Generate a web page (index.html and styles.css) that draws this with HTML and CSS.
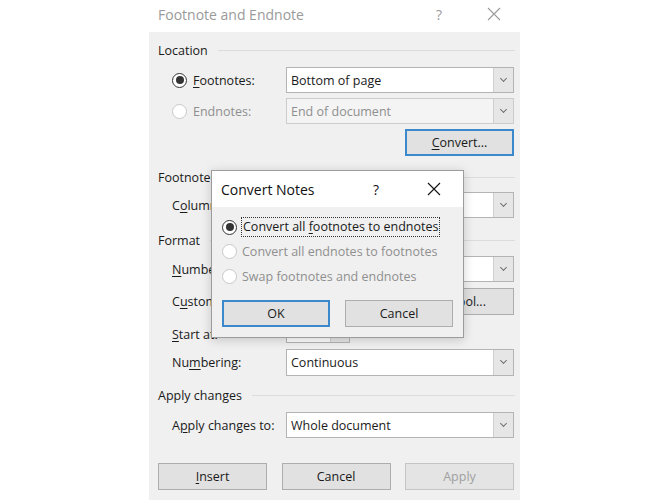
FILE: index.html
```html
<!DOCTYPE html>
<html lang="en">
<head>
    <meta charset="UTF-8">
    <title>Footnote and Endnote</title>
    <link rel="stylesheet" href="styles.css">
</head>
<body>
    <div class="window">
        <div class="titlebar">
            <span class="title">Footnote and Endnote</span>
            <span class="help">?</span>
            <svg class="close" width="14" height="14" viewBox="0 0 14 14"><path d="M1 1 L13 13 M13 1 L1 13" stroke="currentColor" stroke-width="1.1" fill="none"/></svg>
        </div>
        <div class="panel">
            <div class="group group-first"><span>Location</span><i></i></div>
            <div class="row row-first">
                <label class="label radio-label"><span class="radio checked"></span><span><u>F</u>ootnotes:</span></label>
                <div class="select"><span>Bottom of page</span><b class="arrow"></b></div>
            </div>
            <div class="row">
                <label class="label radio-label disabled"><span class="radio"></span><span>Endnotes:</span></label>
                <div class="select disabled"><span>End of document</span><b class="arrow"></b></div>
            </div>
            <div class="row row-end">
                <button class="btn focus"><u>C</u>onvert...</button>
            </div>

            <div class="group"><span>Footnote layout</span><i></i></div>
            <div class="row">
                <label class="label">C<u>o</u>lumns:</label>
                <div class="select"><span>Match section layout</span><b class="arrow"></b></div>
            </div>

            <div class="group group-format"><span>Format</span><i></i></div>
            <div class="row row-gap6">
                <label class="label"><u>N</u>umber format:</label>
                <div class="select"><span>1, 2, 3, ...</span><b class="arrow"></b></div>
            </div>
            <div class="row row-gap6">
                <label class="label">C<u>u</u>stom mark:</label>
                <div class="field"></div>
                <button class="btn"><u>S</u>ymbol...</button>
            </div>
            <div class="row row-spin">
                <label class="label"><u>S</u>tart at:</label>
                <div class="spin"><span>1</span><b class="spin-arrow"></b></div>
            </div>
            <div class="row row-gap6 row-tall">
                <label class="label">Nu<u>m</u>bering:</label>
                <div class="select"><span>Continuous</span><b class="arrow"></b></div>
            </div>

            <div class="group group-apply"><span>Apply changes</span><i></i></div>
            <div class="row row-apply">
                <label class="label">A<u>p</u>ply changes to:</label>
                <div class="select"><span>Whole document</span><b class="arrow"></b></div>
            </div>

            <div class="actions">
                <button class="btn"><u>I</u>nsert</button>
                <button class="btn">Cancel</button>
                <button class="btn disabled">Apply</button>
            </div>
        </div>
    </div>

    <div class="modal">
        <div class="modal-titlebar">
            <span class="modal-title">Convert Notes</span>
            <span class="modal-help">?</span>
            <svg class="modal-close" width="14" height="14" viewBox="0 0 14 14"><path d="M1 1 L13 13 M13 1 L1 13" stroke="currentColor" stroke-width="1.1" fill="none"/></svg>
        </div>
        <div class="modal-body">
            <div class="option"><span class="radio checked"></span><span class="focus-text">Convert all <u>f</u>ootnotes to endnotes</span></div>
            <div class="option disabled"><span class="radio"></span><span>Convert all endnotes to footnotes</span></div>
            <div class="option disabled"><span class="radio"></span><span>Swap footnotes and endnotes</span></div>
            <div class="modal-actions">
                <button class="btn focus">OK</button>
                <button class="btn">Cancel</button>
            </div>
        </div>
    </div>
</body>
</html>
```

FILE: styles.css
```css
body {
    margin: 0;
    width: 670px;
    height: 500px;
    background-color: #ffffff;
    font-family: 'Open Sans', 'Noto Sans', sans-serif;
    font-size: 12.5px;
    color: #1a1a1a;
    position: relative;
    overflow: hidden;
}

u {
    text-decoration-thickness: 1px;
    text-underline-offset: 2px;
}

.window {
    margin-left: 149px;
    width: 371px;
}

.titlebar {
    height: 32px;
    display: flex;
    align-items: center;
    color: #9a9a9a;
    padding-left: 9px;
}

.title {
    font-size: 14px;
    margin-top: -4px;
}

.help {
    margin-left: auto;
    margin-right: 45px;
    font-size: 14px;
    margin-top: -4px;
}

.close {
    margin-right: 19px;
    margin-top: -4px;
}

.panel {
    background-color: #f0f0f0;
    padding: 8px 6px 20px 9px;
}

.group {
    height: 20px;
    display: flex;
    align-items: center;
    margin-top: 11px;
}

.group i {
    flex: 1;
    height: 1px;
    background-color: #dcdcdc;
    margin-left: 10px;
    margin-right: -1px;
}

.group-first {
    margin-top: 0;
}

.group-format {
    margin-top: 12px;
}

.group-apply {
    margin-top: 9px;
}

.row {
    display: flex;
    align-items: center;
    height: 26px;
    margin-top: 5px;
}

.row-first {
    margin-top: 7px;
}

.row-gap6 {
    margin-top: 6px;
}

.row-tall {
    height: 27px;
}

.row-tall .select {
    height: 27px;
}

.row-end {
    justify-content: flex-end;
    height: 27px;
}

.row-spin {
    height: 23px;
    margin-top: 6px;
    align-items: flex-end;
}

.row-apply {
    margin-top: 7px;
}

.label {
    width: 114px;
    padding-left: 14px;
    flex-shrink: 0;
}

.radio-label {
    display: flex;
    align-items: center;
    gap: 6px;
}

.disabled {
    color: #8f8f8f;
}

.radio {
    width: 13px;
    height: 13px;
    border-radius: 50%;
    border: 1px solid #c8c8c8;
    background-color: #ffffff;
    display: inline-flex;
    align-items: center;
    justify-content: center;
    flex-shrink: 0;
}

.radio.checked {
    border-color: #333333;
}

.radio.checked::after {
    content: '';
    width: 8px;
    height: 8px;
    border-radius: 50%;
    background-color: #333333;
}

.select {
    flex: 1;
    height: 26px;
    box-sizing: border-box;
    border: 1px solid #b4b4b4;
    background-color: #ffffff;
    display: flex;
    align-items: center;
    padding-left: 4px;
}

.select span {
    flex: 1;
}

.select.disabled {
    background-color: #f4f4f4;
    border-color: #cccccc;
}

.arrow {
    width: 19px;
    align-self: stretch;
    background-color: #e6e6e6;
    border-left: 1px solid #cfcfcf;
    position: relative;
}

.arrow::after {
    content: '';
    position: absolute;
    left: 7px;
    top: 8px;
    width: 4px;
    height: 4px;
    border-right: 1px solid #707070;
    border-bottom: 1px solid #707070;
    transform: rotate(45deg);
}

.btn {
    font-family: inherit;
    font-size: 12.5px;
    color: #1a1a1a;
    width: 109px;
    height: 27px;
    background-color: #e1e1e1;
    border: 1px solid #adadad;
    padding: 0;
}

.btn.focus {
    border: 2px solid #3c88cc;
}

.btn.disabled {
    color: #a0a0a0;
    border-color: #c4c4c4;
    background-color: #e4e4e4;
}

.field {
    width: 112px;
    height: 26px;
    box-sizing: border-box;
    border: 1px solid #b4b4b4;
    background-color: #ffffff;
    margin-right: 7px;
}

.spin {
    width: 64px;
    height: 23px;
    box-sizing: border-box;
    border: 1px solid #b4b4b4;
    background-color: #ffffff;
    display: flex;
    padding-left: 4px;
    align-items: center;
}

.spin span {
    flex: 1;
}

.spin-arrow {
    width: 18px;
    height: 21px;
    background-color: #e6e6e6;
    border-left: 1px solid #cfcfcf;
}

.actions {
    display: flex;
    justify-content: space-between;
    margin-top: 25px;
}

/* Convert Notes modal on top of the main dialog */
.modal {
    position: absolute;
    left: 211px;
    top: 170px;
    width: 253px;
    height: 168px;
    box-sizing: border-box;
    border: 1px solid #9c9c9c;
    background-color: #f0f0f0;
    box-shadow: 0 2px 10px rgba(0, 0, 0, 0.18);
    display: flex;
    flex-direction: column;
}

.modal-titlebar {
    height: 36px;
    background-color: #ffffff;
    display: flex;
    align-items: center;
    padding-left: 9px;
    color: #111111;
}

.modal-title {
    font-size: 14px;
}

.modal-help {
    margin-left: auto;
    margin-right: 48px;
    font-size: 14px;
}

.modal-close {
    margin-right: 22px;
}

.modal-body {
    flex: 1;
    padding: 10px 10px 0 10px;
}

.option {
    display: flex;
    align-items: center;
    gap: 5px;
    height: 20px;
    margin-bottom: 4.5px;
}

.focus-text {
    outline: 1px dotted #333333;
    outline-offset: 0;
    padding: 0 1px;
    line-height: 18px;
}

.modal-actions {
    display: flex;
    justify-content: space-between;
    margin-top: 14px;
}

.modal-actions .btn {
    width: 108px;
}
```
